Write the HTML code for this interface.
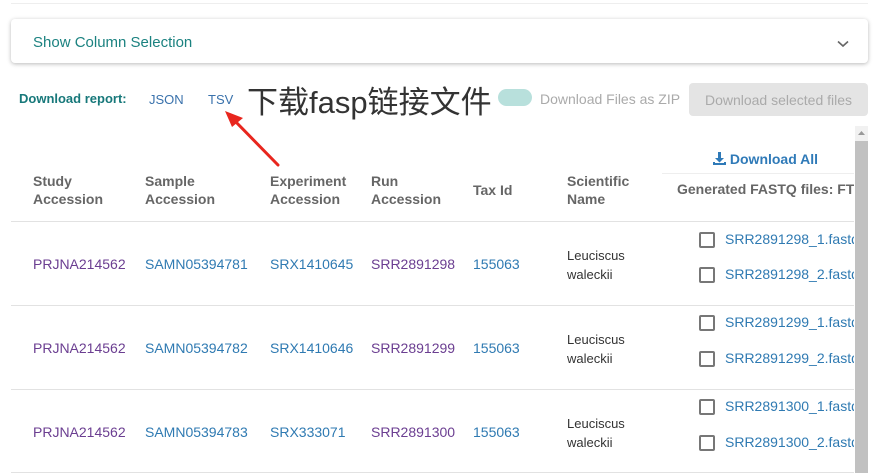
<!DOCTYPE html>
<html><head><meta charset="utf-8"><style>
body{margin:0;width:888px;height:473px;overflow:hidden;background:#fff;font-family:"Liberation Sans",sans-serif;position:relative}
.a{position:absolute;white-space:nowrap}
.p{color:#6b3e91;font-size:14px}
.b{color:#2f7ab2;font-size:14px}
.h{color:#666;font-size:14px;font-weight:bold;line-height:18px}
.hl{position:absolute;left:11px;width:843px;height:1px;background:#e2e2e2}
.cb{position:absolute;left:699px;width:12px;height:12px;border:2px solid #777;border-radius:2px}
</style></head><body>
<div class="a" style="left:11px;top:0;width:857px;height:3px;border-bottom:1px solid #eee"></div>
<div class="a" style="left:11px;top:19px;width:857px;height:44px;border-radius:4px;box-shadow:0 1px 4px rgba(0,0,0,.28);background:#fff"></div>
<div class="a" style="left:33px;top:34px;color:#1b8280;font-size:15px">Show Column Selection</div>
<svg class="a" style="left:837px;top:40px" width="12" height="8"><path d="M1 1.5L6 6L11 1.5" fill="none" stroke="#666" stroke-width="1.6"/></svg>
<div class="a" style="left:19px;top:91px;color:#17787a;font:bold 13px 'Liberation Sans',sans-serif">Download report:</div>
<div class="a" style="left:149px;top:92px;color:#3a72ac;font:13px 'Liberation Sans',sans-serif">JSON</div>
<div class="a" style="left:208px;top:92px;color:#3a72ac;font:13px 'Liberation Sans',sans-serif">TSV</div>
<div class="a" style="left:247px;top:83px;color:#333;font-size:31px;line-height:40px;font-family:'Liberation Sans','Noto Sans CJK SC',sans-serif">下载fasp链接文件</div>
<svg class="a" style="left:215px;top:105px" width="70" height="65"><path d="M63 60L18 14" stroke="#e8261e" stroke-width="3" stroke-linecap="round"/><path d="M10 6L28 13L17 22Z" fill="#e8261e"/></svg>
<div class="a" style="left:498px;top:89px;width:34px;height:17px;border-radius:9px;background:#b8e0dc"></div>
<div class="a" style="left:540px;top:91px;color:#aaa;font-size:14px">Download Files as ZIP</div>
<div class="a" style="left:689px;top:83px;width:179px;height:33px;border-radius:4px;background:#e4e4e4;color:#aaa;font-size:14px;text-align:center;line-height:34px">Download selected files</div>
<div class="a" style="left:855px;top:126px;width:13px;height:347px;background:#f1f1f1"></div>
<div class="a" style="left:855px;top:141px;width:13px;height:332px;background:#c1c1c1"></div>
<svg class="a" style="left:857px;top:130px" width="9" height="6"><path d="M1 5L4.5 1L8 5Z" fill="#999"/></svg>
<div class="a" style="left:713px;top:151px;color:#2f7ab8;font-size:14px;font-weight:bold"><svg width="13" height="13" style="vertical-align:-1px"><path d="M5 0h3v6h3l-4.5 4.5L2 6h3z M0 10h2v1h9v-1h2v3H0z" fill="#2f7ab8"/></svg> Download All</div>
<div class="a" style="left:662px;top:173px;width:192px;height:1px;background:#eee"></div>
<div class="a h" style="left:33px;top:172px">Study<br>Accession</div>
<div class="a h" style="left:145px;top:172px">Sample<br>Accession</div>
<div class="a h" style="left:270px;top:172px">Experiment<br>Accession</div>
<div class="a h" style="left:371px;top:172px">Run<br>Accession</div>
<div class="a h" style="left:473px;top:181px">Tax Id</div>
<div class="a h" style="left:567px;top:172px">Scientific<br>Name</div>
<div class="a h" style="left:677px;top:180px;width:177px;overflow:hidden">Generated FASTQ files: FTP</div>
<div class="hl" style="top:221px"></div>
<div class="hl" style="top:305px"></div>
<div class="hl" style="top:389px"></div>
<div class="hl" style="top:472px"></div>

<div class="a p" style="left:33px;top:256px">PRJNA214562</div>
<div class="a b" style="left:145px;top:256px">SAMN05394781</div>
<div class="a b" style="left:270px;top:256px">SRX1410645</div>
<div class="a p" style="left:371px;top:256px">SRR2891298</div>
<div class="a b" style="left:473px;top:256px">155063</div>
<div class="a" style="left:567px;top:246px;font-size:13px;line-height:19px;color:#333">Leuciscus<br>waleckii</div>
<div class="cb" style="top:232px"></div><div class="cb" style="top:267px"></div>
<div class="a b" style="left:725px;top:231px;width:129px;overflow:hidden">SRR2891298_1.fastq.gz</div>
<div class="a b" style="left:725px;top:266px;width:129px;overflow:hidden">SRR2891298_2.fastq.gz</div>

<div class="a p" style="left:33px;top:340px">PRJNA214562</div>
<div class="a b" style="left:145px;top:340px">SAMN05394782</div>
<div class="a b" style="left:270px;top:340px">SRX1410646</div>
<div class="a p" style="left:371px;top:340px">SRR2891299</div>
<div class="a b" style="left:473px;top:340px">155063</div>
<div class="a" style="left:567px;top:330px;font-size:13px;line-height:19px;color:#333">Leuciscus<br>waleckii</div>
<div class="cb" style="top:315px"></div><div class="cb" style="top:351px"></div>
<div class="a b" style="left:725px;top:314px;width:129px;overflow:hidden">SRR2891299_1.fastq.gz</div>
<div class="a b" style="left:725px;top:350px;width:129px;overflow:hidden">SRR2891299_2.fastq.gz</div>

<div class="a p" style="left:33px;top:424px">PRJNA214562</div>
<div class="a b" style="left:145px;top:424px">SAMN05394783</div>
<div class="a b" style="left:270px;top:424px">SRX333071</div>
<div class="a p" style="left:371px;top:424px">SRR2891300</div>
<div class="a b" style="left:473px;top:424px">155063</div>
<div class="a" style="left:567px;top:414px;font-size:13px;line-height:19px;color:#333">Leuciscus<br>waleckii</div>
<div class="cb" style="top:399px"></div><div class="cb" style="top:435px"></div>
<div class="a b" style="left:725px;top:398px;width:129px;overflow:hidden">SRR2891300_1.fastq.gz</div>
<div class="a b" style="left:725px;top:434px;width:129px;overflow:hidden">SRR2891300_2.fastq.gz</div>
</body></html>
